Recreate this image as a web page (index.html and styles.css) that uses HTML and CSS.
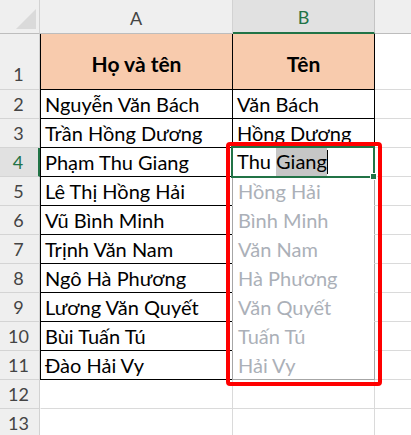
FILE: index.html
```html
<!DOCTYPE html>
<html>
<head>
<meta charset="utf-8">
<link rel="stylesheet" href="styles.css">
</head>
<body>
<div class="sheet">
  <div class="corner"><span class="tri"></span></div>
  <div class="ch">A</div>
  <div class="ch sel">B</div>
  <div class="ch last"></div>

  <div class="rh tall">1</div>
  <div class="c a head">Họ và tên</div>
  <div class="c b head">Tên</div>
  <div class="c e"></div>

  <div class="rh">2</div><div class="c a">Nguyễn Văn Bách</div><div class="c b">Văn Bách</div><div class="c e"></div>
  <div class="rh">3</div><div class="c a">Trần Hồng Dương</div><div class="c b">Hồng Dương</div><div class="c e"></div>
  <div class="rh sel">4</div><div class="c a">Phạm Thu Giang</div><div class="c b active"><span class="edit">Thu <span class="hl">Giang</span><span class="caret"></span></span><span class="selbox"><span class="handle"></span></span></div><div class="c e"></div>
  <div class="rh">5</div><div class="c a">Lê Thị Hồng Hải</div><div class="c b ghost">Hồng Hải</div><div class="c e"></div>
  <div class="rh">6</div><div class="c a">Vũ Bình Minh</div><div class="c b ghost">Bình Minh</div><div class="c e"></div>
  <div class="rh">7</div><div class="c a">Trịnh Văn Nam</div><div class="c b ghost">Văn Nam</div><div class="c e"></div>
  <div class="rh">8</div><div class="c a">Ngô Hà Phương</div><div class="c b ghost">Hà Phương</div><div class="c e"></div>
  <div class="rh">9</div><div class="c a">Lương Văn Quyết</div><div class="c b ghost">Văn Quyết</div><div class="c e"></div>
  <div class="rh">10</div><div class="c a">Bùi Tuấn Tú</div><div class="c b ghost">Tuấn Tú</div><div class="c e"></div>
  <div class="rh">11</div><div class="c a">Đào Hải Vy</div><div class="c b ghost endg">Hải Vy</div><div class="c e"></div>
  <div class="rh">12</div><div class="c a blank"></div><div class="c b blank"></div><div class="c e"></div>
  <div class="rh">13</div><div class="c a blank"></div><div class="c b blank"></div><div class="c e"></div>

  <div class="redbox"></div>
</div>
</body>
</html>
```

FILE: styles.css
```css
html, body {
  margin: 0;
  padding: 0;
  background: #ffffff;
}
body {
  font-family: Lato, "Open Sans", sans-serif;
  overflow: hidden;
}
.sheet {
  position: relative;
  display: grid;
  grid-template-columns: 40px 193px 142px 1fr;
  grid-template-rows: 34px 56px repeat(12, 29px);
  width: 411px;
  height: 435px;
  overflow: hidden;
}
.corner {
  position: relative;
  background: #efefef;
  border-right: 1px solid #d2d2d2;
  border-bottom: 1px solid #bdbdbd;
  box-sizing: border-box;
}
.tri {
  position: absolute;
  right: 3px;
  bottom: 4px;
  width: 0;
  height: 0;
  border-left: 20px solid transparent;
  border-bottom: 20px solid #dadada;
}
.ch {
  box-sizing: border-box;
  background: #efefef;
  border-right: 1px solid #d2d2d2;
  border-bottom: 1px solid #bdbdbd;
  display: flex;
  align-items: flex-end;
  justify-content: center;
  padding-bottom: 4px;
  font-size: 18px;
  color: #444444;
}
.ch.sel {
  background: #e1e1e1;
  border-bottom: 2px solid #217346;
  color: #217346;
  border-right-color: #c4c4c4;
}
.ch.last {
  border-right: none;
  background: #efefef;
}
.rh {
  box-sizing: border-box;
  background: #efefef;
  border-right: 1px solid #d2d2d2;
  border-bottom: 1px solid #d4d4d4;
  display: flex;
  align-items: flex-end;
  justify-content: center;
  padding-bottom: 3px;
  padding-right: 2px;
  font-size: 18px;
  color: #444444;
}
.rh.tall {
  padding-bottom: 4px;
}
.rh.sel {
  background: #e1e1e1;
  color: #217346;
  border-right: 2px solid #217346;
}
.c {
  box-sizing: border-box;
  font-size: 20px;
  color: #000000;
  display: flex;
  align-items: flex-end;
  padding: 0 0 2px 4px;
  white-space: nowrap;
  border-bottom: 1px solid #000000;
  border-right: 1px solid #000000;
}
.c.a {
  border-left: 1px solid #000000;
}
.c.head {
  background: #f8cbad;
  font-weight: bold;
  font-size: 21px;
  justify-content: center;
  align-items: center;
  padding: 4px 0 0 0;
}
.c.e {
  border-right: none;
  border-bottom: 1px solid #dadada;
}
.c.blank {
  border-color: #dadada;
}
.c.a.blank {
  border-left-color: #ffffff;
}
.c.ghost {
  color: #abb0b8;
  border-bottom-color: #ffffff;
  border-right-color: #a6a6a6;
  border-left: 1px solid #a6a6a6;
  margin-left: -1px;
  padding-left: 5px;
}
.c.ghost.endg {
  border-bottom-color: #a6a6a6;
}
.c.active {
  position: relative;
}
.edit {
  white-space: pre;
}
.hl {
  background: #c6c6c6;
  padding: 2px 0 3px 0;
}
.caret {
  display: inline-block;
  width: 1px;
  height: 24px;
  background: #000000;
  vertical-align: -5px;
}
.selbox {
  position: absolute;
  left: -2px;
  top: -2px;
  right: -1px;
  bottom: -2px;
  border: 2px solid #217346;
}
.handle {
  position: absolute;
  right: -4px;
  bottom: -4px;
  width: 5px;
  height: 5px;
  background: #217346;
  border: 1px solid #ffffff;
}
.redbox {
  position: absolute;
  left: 226px;
  top: 142px;
  width: 156px;
  height: 244px;
  box-sizing: border-box;
  border: 4px solid #ff0000;
  border-radius: 4px;
}
```
